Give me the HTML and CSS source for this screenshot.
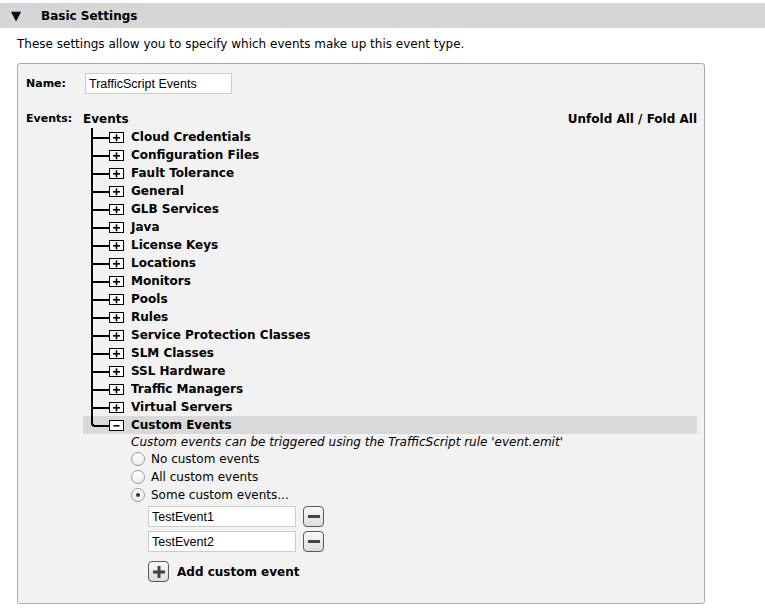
FILE: index.html
```html
<!DOCTYPE html>
<html>
<head>
<meta charset="utf-8">
<link rel="stylesheet" href="styles.css">
</head>
<body>
<div class="section-header"><span class="tri">▼</span><span class="section-title">Basic Settings</span></div>
<p class="desc">These settings allow you to specify which events make up this event type.</p>
<div class="panel">
  <div class="form-row name-row">
    <span class="label">Name:</span>
    <input class="text-input name-input" type="text" value="TrafficScript Events">
  </div>
  <div class="form-row events-row">
    <span class="label">Events:</span>
    <div class="tree">
      <div class="tree-root"><span class="bold">Events</span><span class="bold">Unfold All / Fold All</span></div>
      <div class="tree-row"><span class="conn"></span><svg class="box" width="15" height="11" viewBox="0 0 15 11"><rect x="0.5" y="0.5" width="14" height="10" fill="#fff" stroke="#000"/><rect x="4" y="5" width="7" height="1.6" fill="#000"/><rect x="6.7" y="2.3" width="1.6" height="7" fill="#000"/></svg><span class="item">Cloud Credentials</span></div>
      <div class="tree-row"><span class="conn"></span><svg class="box" width="15" height="11" viewBox="0 0 15 11"><rect x="0.5" y="0.5" width="14" height="10" fill="#fff" stroke="#000"/><rect x="4" y="5" width="7" height="1.6" fill="#000"/><rect x="6.7" y="2.3" width="1.6" height="7" fill="#000"/></svg><span class="item">Configuration Files</span></div>
      <div class="tree-row"><span class="conn"></span><svg class="box" width="15" height="11" viewBox="0 0 15 11"><rect x="0.5" y="0.5" width="14" height="10" fill="#fff" stroke="#000"/><rect x="4" y="5" width="7" height="1.6" fill="#000"/><rect x="6.7" y="2.3" width="1.6" height="7" fill="#000"/></svg><span class="item">Fault Tolerance</span></div>
      <div class="tree-row"><span class="conn"></span><svg class="box" width="15" height="11" viewBox="0 0 15 11"><rect x="0.5" y="0.5" width="14" height="10" fill="#fff" stroke="#000"/><rect x="4" y="5" width="7" height="1.6" fill="#000"/><rect x="6.7" y="2.3" width="1.6" height="7" fill="#000"/></svg><span class="item">General</span></div>
      <div class="tree-row"><span class="conn"></span><svg class="box" width="15" height="11" viewBox="0 0 15 11"><rect x="0.5" y="0.5" width="14" height="10" fill="#fff" stroke="#000"/><rect x="4" y="5" width="7" height="1.6" fill="#000"/><rect x="6.7" y="2.3" width="1.6" height="7" fill="#000"/></svg><span class="item">GLB Services</span></div>
      <div class="tree-row"><span class="conn"></span><svg class="box" width="15" height="11" viewBox="0 0 15 11"><rect x="0.5" y="0.5" width="14" height="10" fill="#fff" stroke="#000"/><rect x="4" y="5" width="7" height="1.6" fill="#000"/><rect x="6.7" y="2.3" width="1.6" height="7" fill="#000"/></svg><span class="item">Java</span></div>
      <div class="tree-row"><span class="conn"></span><svg class="box" width="15" height="11" viewBox="0 0 15 11"><rect x="0.5" y="0.5" width="14" height="10" fill="#fff" stroke="#000"/><rect x="4" y="5" width="7" height="1.6" fill="#000"/><rect x="6.7" y="2.3" width="1.6" height="7" fill="#000"/></svg><span class="item">License Keys</span></div>
      <div class="tree-row"><span class="conn"></span><svg class="box" width="15" height="11" viewBox="0 0 15 11"><rect x="0.5" y="0.5" width="14" height="10" fill="#fff" stroke="#000"/><rect x="4" y="5" width="7" height="1.6" fill="#000"/><rect x="6.7" y="2.3" width="1.6" height="7" fill="#000"/></svg><span class="item">Locations</span></div>
      <div class="tree-row"><span class="conn"></span><svg class="box" width="15" height="11" viewBox="0 0 15 11"><rect x="0.5" y="0.5" width="14" height="10" fill="#fff" stroke="#000"/><rect x="4" y="5" width="7" height="1.6" fill="#000"/><rect x="6.7" y="2.3" width="1.6" height="7" fill="#000"/></svg><span class="item">Monitors</span></div>
      <div class="tree-row"><span class="conn"></span><svg class="box" width="15" height="11" viewBox="0 0 15 11"><rect x="0.5" y="0.5" width="14" height="10" fill="#fff" stroke="#000"/><rect x="4" y="5" width="7" height="1.6" fill="#000"/><rect x="6.7" y="2.3" width="1.6" height="7" fill="#000"/></svg><span class="item">Pools</span></div>
      <div class="tree-row"><span class="conn"></span><svg class="box" width="15" height="11" viewBox="0 0 15 11"><rect x="0.5" y="0.5" width="14" height="10" fill="#fff" stroke="#000"/><rect x="4" y="5" width="7" height="1.6" fill="#000"/><rect x="6.7" y="2.3" width="1.6" height="7" fill="#000"/></svg><span class="item">Rules</span></div>
      <div class="tree-row"><span class="conn"></span><svg class="box" width="15" height="11" viewBox="0 0 15 11"><rect x="0.5" y="0.5" width="14" height="10" fill="#fff" stroke="#000"/><rect x="4" y="5" width="7" height="1.6" fill="#000"/><rect x="6.7" y="2.3" width="1.6" height="7" fill="#000"/></svg><span class="item">Service Protection Classes</span></div>
      <div class="tree-row"><span class="conn"></span><svg class="box" width="15" height="11" viewBox="0 0 15 11"><rect x="0.5" y="0.5" width="14" height="10" fill="#fff" stroke="#000"/><rect x="4" y="5" width="7" height="1.6" fill="#000"/><rect x="6.7" y="2.3" width="1.6" height="7" fill="#000"/></svg><span class="item">SLM Classes</span></div>
      <div class="tree-row"><span class="conn"></span><svg class="box" width="15" height="11" viewBox="0 0 15 11"><rect x="0.5" y="0.5" width="14" height="10" fill="#fff" stroke="#000"/><rect x="4" y="5" width="7" height="1.6" fill="#000"/><rect x="6.7" y="2.3" width="1.6" height="7" fill="#000"/></svg><span class="item">SSL Hardware</span></div>
      <div class="tree-row"><span class="conn"></span><svg class="box" width="15" height="11" viewBox="0 0 15 11"><rect x="0.5" y="0.5" width="14" height="10" fill="#fff" stroke="#000"/><rect x="4" y="5" width="7" height="1.6" fill="#000"/><rect x="6.7" y="2.3" width="1.6" height="7" fill="#000"/></svg><span class="item">Traffic Managers</span></div>
      <div class="tree-row"><span class="conn"></span><svg class="box" width="15" height="11" viewBox="0 0 15 11"><rect x="0.5" y="0.5" width="14" height="10" fill="#fff" stroke="#000"/><rect x="4" y="5" width="7" height="1.6" fill="#000"/><rect x="6.7" y="2.3" width="1.6" height="7" fill="#000"/></svg><span class="item">Virtual Servers</span></div>
      <div class="tree-row selected"><span class="conn last"></span><svg class="box" width="15" height="11" viewBox="0 0 15 11"><rect x="0.5" y="0.5" width="14" height="10" fill="#fff" stroke="#000"/><rect x="4.5" y="5" width="6" height="1.6" fill="#000"/></svg><span class="item">Custom Events</span></div>
      <div class="custom">
        <div class="hint">Custom events can be triggered using the TrafficScript rule 'event.emit'</div>
        <label class="radio-row"><span class="radio"></span>No custom events</label>
        <label class="radio-row"><span class="radio"></span>All custom events</label>
        <label class="radio-row"><span class="radio checked"></span>Some custom events...</label>
        <div class="event-list">
          <div class="event-row"><input class="text-input ev-input" type="text" value="TestEvent1"><span class="btn"><span class="bar"></span></span></div>
          <div class="event-row"><input class="text-input ev-input" type="text" value="TestEvent2"><span class="btn"><span class="bar"></span></span></div>
          <div class="add-row"><span class="btn add"><svg width="12" height="12" viewBox="0 0 12 12"><rect x="0" y="4.5" width="12" height="3" fill="#444"/><rect x="4.5" y="0" width="3" height="12" fill="#444"/></svg></span><span class="bold">Add custom event</span></div>
        </div>
      </div>
    </div>
  </div>
</div>
</body>
</html>
```
FILE: styles.css
```css
* { box-sizing: border-box; }
body {
  margin: 0;
  font-family: "DejaVu Sans", Verdana, sans-serif;
  font-size: 12px;
  color: #000;
  background: #fff;
}
.bold { font-weight: bold; }
.section-header {
  margin-top: 3px;
  height: 25px;
  background: #d6d6d6;
  display: flex;
  align-items: center;
  padding-left: 11px;
}
.tri { font-size: 13px; width: 30px; }
.section-title { font-weight: bold; font-size: 12px; }
.desc {
  margin: 9px 0 0 17px;
  font-size: 12px;
  line-height: 14px;
}
.panel {
  margin: 12px 0 0 17px;
  width: 688px;
  height: 541px;
  border: 1px solid #aaa;
  border-radius: 3px;
  background: #f2f2f2;
  padding: 9px 7px 0 8px;
}
.form-row {
  display: grid;
  grid-template-columns: 57px 1fr;
}
.label { font-weight: bold; font-size: 11px; }
.name-row { align-items: center; }
.text-input {
  font-family: "Liberation Sans", Arial, sans-serif;
  font-size: 12.5px;
  border: 1px solid #ccc;
  background: #fff;
  padding: 0 3px;
  outline: none;
  color: #000;
}
.name-input { width: 147px; height: 21px; margin-left: 2px; }
.events-row { margin-top: 16px; }
.events-row .label { line-height: 18px; }
.tree-root {
  display: flex;
  justify-content: space-between;
  height: 18px;
  line-height: 18px;
}
.tree-row {
  display: flex;
  align-items: center;
  height: 18px;
  padding-left: 8px;
}
.tree-row.selected { background: #d9d9d9; }
.conn {
  align-self: stretch;
  width: 18px;
  flex: none;
  background:
    linear-gradient(#000, #000) 0 0 / 2px 100% no-repeat,
    linear-gradient(#000, #000) 0 9px / 100% 2px no-repeat;
}
.conn.last {
  align-self: flex-start;
  height: 11px;
  background: none;
  border-left: 2px solid #000;
  border-bottom: 2px solid #000;
  border-bottom-left-radius: 4px;
}
.box { flex: none; display: block; }
.item { font-weight: bold; margin-left: 7px; line-height: 18px; }
.custom { padding-left: 48px; }
.hint { font-style: italic; line-height: 16px; height: 16px; }
.radio-row {
  display: flex;
  align-items: center;
  height: 18px;
}
.radio {
  width: 14px;
  height: 14px;
  border-radius: 50%;
  border: 1px solid #9a9a9a;
  background: linear-gradient(#ffffff, #ececec);
  margin-right: 6px;
  display: flex;
  align-items: center;
  justify-content: center;
}
.radio.checked::after {
  content: "";
  width: 4px;
  height: 4px;
  border-radius: 50%;
  background: #333;
}
.event-list { padding-left: 17px; padding-top: 0; }
.event-row {
  display: flex;
  align-items: center;
  gap: 7px;
  height: 25px;
}
.ev-input { width: 148px; height: 21px; }
.btn {
  width: 21px;
  height: 21px;
  border: 1px solid #5a5a5a;
  border-radius: 4px;
  background: linear-gradient(#f8f8f8, #dcdcdc);
  display: flex;
  align-items: center;
  justify-content: center;
  flex: none;
}
.btn .bar { width: 12px; height: 3px; background: #444; }
.add-row {
  display: flex;
  align-items: center;
  gap: 8px;
  margin-top: 7px;
}
.add-row .bold { font-size: 12px; }
```
